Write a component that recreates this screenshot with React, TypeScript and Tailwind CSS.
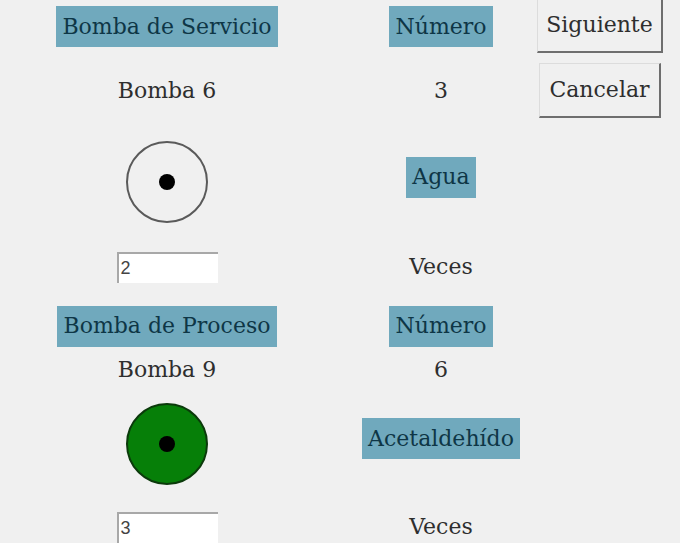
import React from "react"

const font = { fontFamily: '"DejaVu Serif", "Liberation Serif", serif' }

const Label = ({ children, className = "" }: { children: React.ReactNode; className?: string }) => (
  <div className={`h-[41px] px-[6px] flex items-center bg-[#70a9bd] text-[#0e3646] text-[22px] leading-none ${className}`}>
    {children}
  </div>
)

const Plain = ({ children }: { children: React.ReactNode }) => (
  <div className="text-[22px] leading-none text-[#2e2e2e]">{children}</div>
)

const Pump = ({ active }: { active?: boolean }) => (
  <svg width="84" height="84" viewBox="0 0 84 84">
    <circle
      cx="42"
      cy="42"
      r="40"
      fill={active ? "#067f08" : "none"}
      stroke={active ? "#0b3a0b" : "#5a5a5a"}
      strokeWidth="2"
    />
    <circle cx="42" cy="42" r="8" fill="#000" />
  </svg>
)

const Field = ({ value }: { value: string }) => (
  <div
    className="w-[101px] h-[31px] shrink-0 bg-white border-t-2 border-l-2 border-[#a8a8a8] flex items-center pl-[2px] text-[18px] text-[#444]"
    style={{ fontFamily: '"Liberation Sans", Arial, sans-serif' }}
  >
    {value}
  </div>
)

const Row = ({ h, left, mid }: { h: string; left: React.ReactNode; mid: React.ReactNode }) => (
  <div className={`flex items-center shrink-0 ${h}`}>
    <div className="w-[334px] flex justify-center">{left}</div>
    <div className="w-[192px] ml-[11px] flex justify-center">{mid}</div>
  </div>
)

const WinButton = ({ children, className = "" }: { children: React.ReactNode; className?: string }) => (
  <button
    className={`bg-[#f0f0f0] border-t border-l border-[#dcdcdc] border-r-2 border-b-2 border-r-[#6e6e6e] border-b-[#6e6e6e] text-[#2e2e2e] text-[22px] leading-none flex items-center justify-center shrink-0 ${className}`}
    style={font}
  >
    {children}
  </button>
)

export default function App() {
  return (
    <div className="w-[680px] h-[543px] overflow-hidden bg-[#f0f0f0] flex" style={font}>
      <div className="w-[537px] flex flex-col">
        <Row h="h-[53px]" left={<Label>Bomba de Servicio</Label>} mid={<Label>Número</Label>} />
        <Row h="h-[76px]" left={<Plain>Bomba 6</Plain>} mid={<Plain>3</Plain>} />
        <Row h="h-[106px]" left={<Pump />} mid={<Label className="mb-[10px]">Agua</Label>} />
        <Row h="h-[64px]" left={<Field value="2" />} mid={<Plain>Veces</Plain>} />
        <Row h="h-[54px]" left={<Label>Bomba de Proceso</Label>} mid={<Label>Número</Label>} />
        <Row h="h-[34px]" left={<Plain>Bomba 9</Plain>} mid={<Plain>6</Plain>} />
        <Row h="h-[114px]" left={<Pump active />} mid={<Label className="mb-[11px]">Acetaldehído</Label>} />
        <Row h="h-[52px]" left={<Field value="3" />} mid={<Plain>Veces</Plain>} />
      </div>
      <div className="flex flex-col">
        <WinButton className="w-[126px] h-[55px] -mt-[2px]">Siguiente</WinButton>
        <WinButton className="w-[122px] h-[55px] ml-[2px] mt-[10px]">Cancelar</WinButton>
      </div>
    </div>
  )
}
